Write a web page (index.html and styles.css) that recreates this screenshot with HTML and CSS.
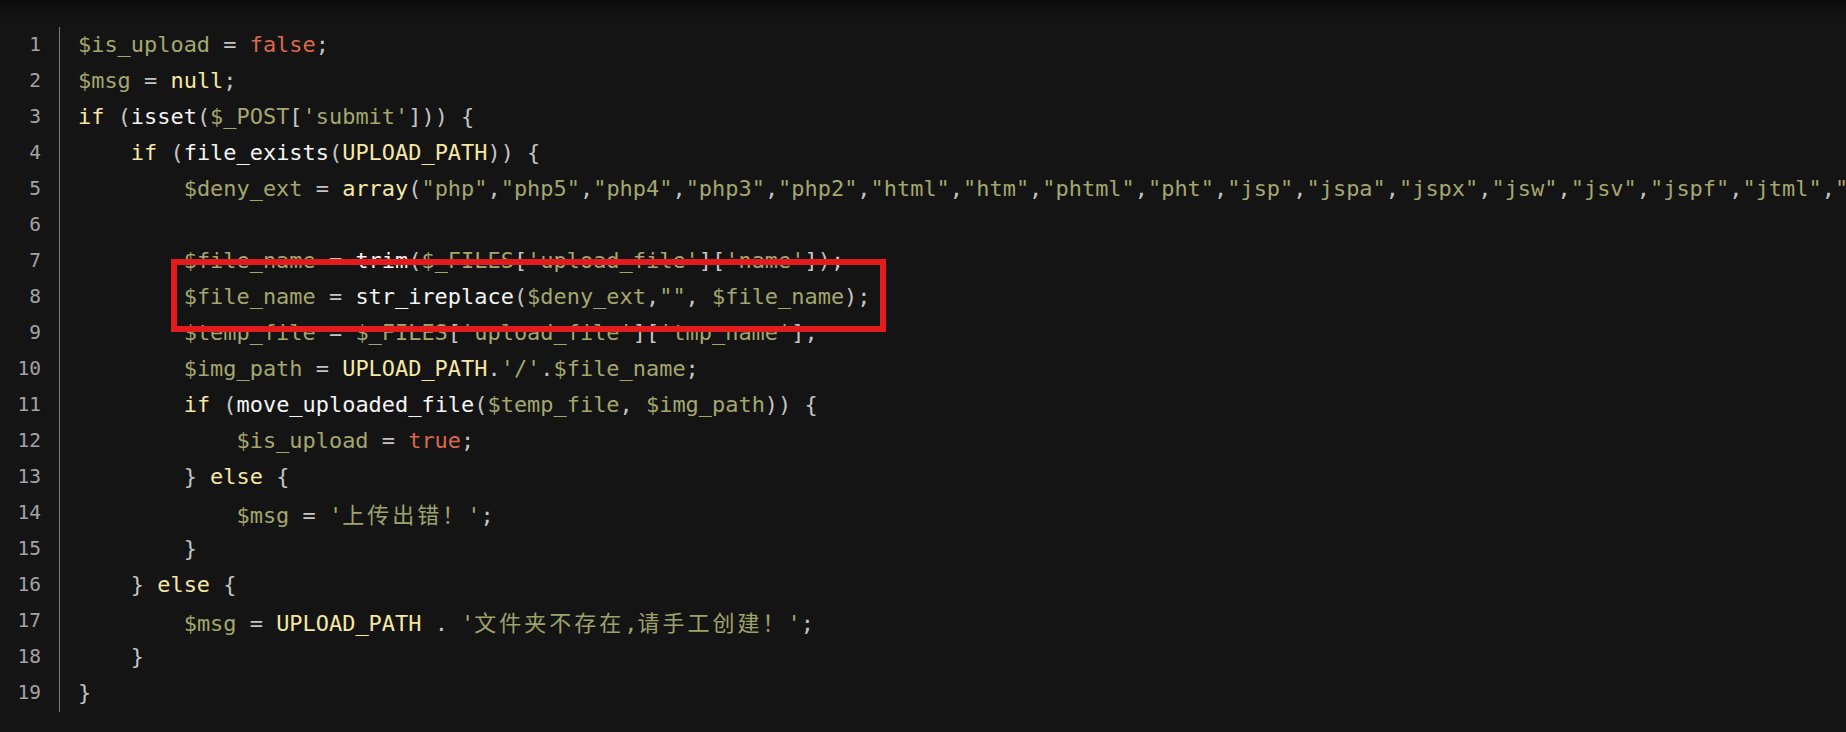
FILE: index.html
```html
<!DOCTYPE html>
<html>
<head>
<meta charset="utf-8">
<link rel="stylesheet" href="styles.css">
</head>
<body>
<div class="editor">
  <div class="gutter">
    <div class="ln">1</div><div class="ln">2</div><div class="ln">3</div><div class="ln">4</div><div class="ln">5</div><div class="ln">6</div><div class="ln">7</div><div class="ln">8</div><div class="ln">9</div><div class="ln">10</div><div class="ln">11</div><div class="ln">12</div><div class="ln">13</div><div class="ln">14</div><div class="ln">15</div><div class="ln">16</div><div class="ln">17</div><div class="ln">18</div><div class="ln">19</div>
  </div>
  <div class="code">
<div class="line"><span class="v">$is_upload</span> = <span class="b">false</span>;</div>
<div class="line"><span class="v">$msg</span> = <span class="k">null</span>;</div>
<div class="line"><span class="k">if</span> (<span class="f">isset</span>(<span class="v">$_POST</span>[<span class="s">'submit'</span>])) {</div>
<div class="line">    <span class="k">if</span> (<span class="f">file_exists</span>(<span class="k">UPLOAD_PATH</span>)) {</div>
<div class="line">        <span class="v">$deny_ext</span> = <span class="k">array</span>(<span class="s">"php"</span>,<span class="s">"php5"</span>,<span class="s">"php4"</span>,<span class="s">"php3"</span>,<span class="s">"php2"</span>,<span class="s">"html"</span>,<span class="s">"htm"</span>,<span class="s">"phtml"</span>,<span class="s">"pht"</span>,<span class="s">"jsp"</span>,<span class="s">"jspa"</span>,<span class="s">"jspx"</span>,<span class="s">"jsw"</span>,<span class="s">"jsv"</span>,<span class="s">"jspf"</span>,<span class="s">"jtml"</span>,<span class="s">"</span></div>
<div class="line"> </div>
<div class="line">        <span class="v">$file_name</span> = <span class="f">trim</span>(<span class="v">$_FILES</span>[<span class="s">'upload_file'</span>][<span class="s">'name'</span>]);</div>
<div class="line">        <span class="v">$file_name</span> = <span class="f">str_ireplace</span>(<span class="v">$deny_ext</span>,<span class="s">""</span>, <span class="v">$file_name</span>);</div>
<div class="line">        <span class="v">$temp_file</span> = <span class="v">$_FILES</span>[<span class="s">'upload_file'</span>][<span class="s">'tmp_name'</span>];</div>
<div class="line">        <span class="v">$img_path</span> = <span class="k">UPLOAD_PATH</span>.<span class="s">'/'</span>.<span class="v">$file_name</span>;</div>
<div class="line">        <span class="k">if</span> (<span class="f">move_uploaded_file</span>(<span class="v">$temp_file</span>, <span class="v">$img_path</span>)) {</div>
<div class="line">            <span class="v">$is_upload</span> = <span class="b">true</span>;</div>
<div class="line">        } <span class="k">else</span> {</div>
<div class="line">            <span class="v">$msg</span> = <span class="s">'<span class="cjk">上传出错！</span>'</span>;</div>
<div class="line">        }</div>
<div class="line">    } <span class="k">else</span> {</div>
<div class="line">        <span class="v">$msg</span> = <span class="k">UPLOAD_PATH</span> . <span class="s">'<span class="cjk">文件夹不存在</span>,<span class="cjk">请手工创建！</span>'</span>;</div>
<div class="line">    }</div>
<div class="line">}</div>
  </div>
  <div class="highlight"></div>
</div>
</body>
</html>
```
FILE: styles.css
```css
html, body {
  margin: 0;
  padding: 0;
  overflow: hidden;
}
body {
  width: 1846px;
  height: 732px;
  background: linear-gradient(#0a0a0a 0px, #111111 10px, #141414 20px, #141414 100%);
  font-family: "DejaVu Sans Mono", "Noto Sans CJK SC", monospace;
}
.editor {
  position: relative;
  display: flex;
  padding-top: 27px;
  height: 705px;
  overflow: hidden;
}
.gutter {
  flex: 0 0 auto;
  width: 41px;
  padding-right: 18px;
  border-right: 1px solid #7a7a7a;
  height: 685px;
}
.ln {
  height: 36px;
  line-height: 36px;
  text-align: right;
  font-size: 19.5px;
  color: #a2a3a6;
}
.code {
  flex: 1 1 auto;
  padding-left: 18px;
  min-width: 0;
  overflow: hidden;
}
.line {
  height: 36px;
  line-height: 36px;
  font-size: 21.95px;
  white-space: pre;
  color: #c4c4c4;
}
.v, .s { color: #a3a76e; }
.k { color: #f6e8a2; }
.f { color: #f4f4f4; }
.b { color: #dc684c; }
.cjk {
  font-family: "Noto Sans CJK SC", sans-serif;
  font-size: 22px;
  letter-spacing: 3px;
  color: #9ea26c;
}
.highlight {
  position: absolute;
  left: 171px;
  top: 259px;
  width: 703px;
  height: 61px;
  border: 6px solid #e31b1d;
}
```
